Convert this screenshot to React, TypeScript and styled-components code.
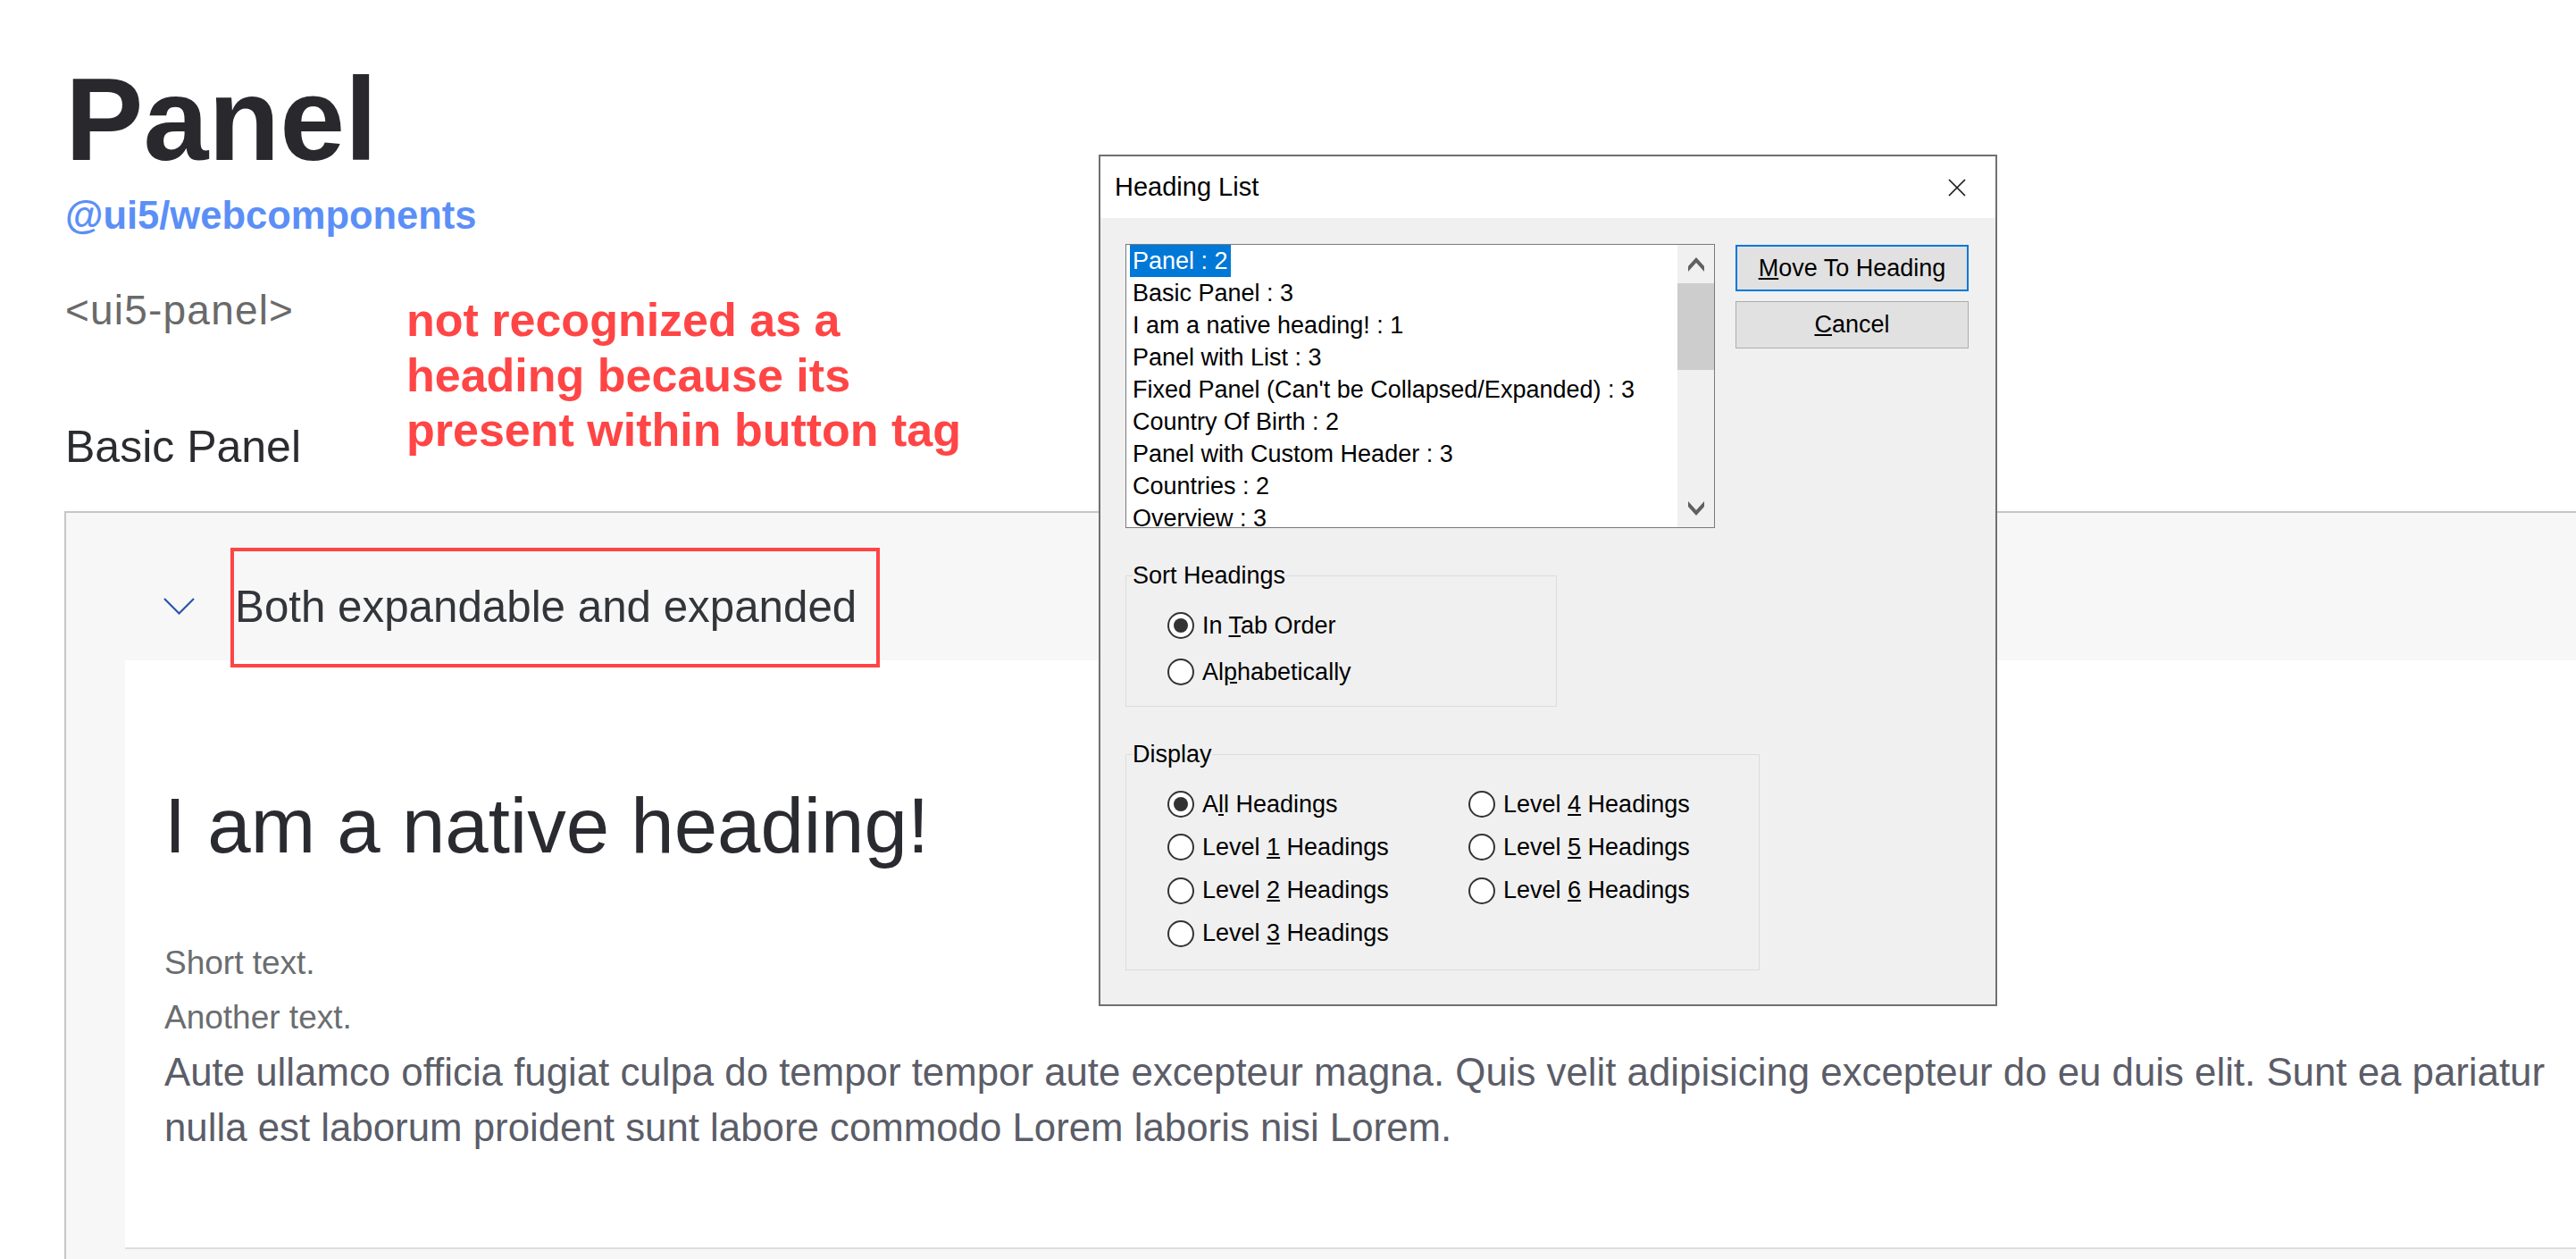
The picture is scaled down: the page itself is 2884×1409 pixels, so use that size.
import React from 'react'
import styled, { createGlobalStyle } from 'styled-components'

const GlobalStyle = createGlobalStyle`
  html, body {
    margin: 0;
    padding: 0;
    background: #ffffff;
  }
  body {
    font-family: "Liberation Sans", Arial, sans-serif;
    overflow: hidden;
  }
`

const Page = styled.div`
  position: relative;
  width: 2884px;
  height: 1409px;
  overflow: hidden;
  padding-left: 73px;
  box-sizing: border-box;
  display: flex;
  flex-direction: column;
`

const Title = styled.h1`
  margin: 68px 0 0;
  font-size: 131px;
  line-height: 1;
  font-weight: 700;
  color: #29292d;
`

const Package = styled.div`
  margin-top: 20.6px;
  font-size: 43.5px;
  line-height: 1;
  font-weight: 700;
  color: #5b8ff7;
`

const IntroRow = styled.div`
  display: flex;
  margin-top: 61px;
`

const IntroColumn = styled.div`
  width: 382px;
  display: flex;
  flex-direction: column;
`

const TagName = styled.div`
  font-size: 46px;
  line-height: 1;
  letter-spacing: 1.2px;
  color: #6a6a6a;
`

const SectionTitle = styled.div`
  margin-top: 105px;
  font-size: 50px;
  line-height: 1;
  color: #2b2c30;
`

const Note = styled.div`
  width: 640px;
  margin-top: 4px;
  font-size: 52px;
  line-height: 61.5px;
  font-weight: 700;
  color: #ff4545;
`

const PanelBox = styled.section`
  flex: 1;
  margin-top: 47px;
  margin-left: -1px;
  border-left: 2px solid #c6c6c6;
  border-top: 2px solid #c6c6c6;
  background: #f7f7f7;
`

const PanelHeader = styled.div`
  display: flex;
  align-items: center;
  padding: 79.5px 0 36.5px 109px;
`

const Chevron = styled.svg`
  width: 35px;
  height: 19px;
  flex: none;
`

const HeaderTitle = styled.span`
  position: relative;
  margin-left: 45px;
  font-size: 49.3px;
  line-height: 1;
  color: #32363a;

  &::after {
    content: '';
    position: absolute;
    left: -5px;
    top: -40.5px;
    width: 727px;
    height: 134px;
    border: 4px solid #ff4444;
    box-sizing: border-box;
  }
`

const PanelContent = styled.div`
  margin-left: 66px;
  padding: 141px 0 103px 44px;
  background: #ffffff;
  border-bottom: 2px solid #dedede;
`

const NativeHeading = styled.h2`
  margin: 0;
  font-size: 87px;
  line-height: 1;
  font-weight: 400;
  color: #2a2b30;
`

const ShortLines = styled.div`
  margin-top: 79.7px;
  font-size: 37px;
  line-height: 61px;
  color: #6a6d70;
`

const Paragraph = styled.p`
  margin: 0;
  padding-right: 20px;
  font-size: 43.8px;
  line-height: 62px;
  color: #5b5d68;
`

/* Windows dialog on top of the page */

const Dialog = styled.div`
  position: absolute;
  left: 1230px;
  top: 173px;
  width: 1006px;
  height: 953px;
  box-sizing: border-box;
  border: 2px solid #707070;
  background: #f0f0f0;
  font-size: 27px;
  color: #000000;
`

const TitleBar = styled.div`
  height: 69px;
  display: flex;
  align-items: center;
  justify-content: space-between;
  padding: 0 33px 0 16px;
  background: #ffffff;
  font-size: 29px;
`

const DialogBody = styled.div`
  padding: 29px 0 0 28px;
`

const TopRow = styled.div`
  display: flex;
  gap: 23px;
  align-items: flex-start;
`

const ListBox = styled.div`
  width: 660px;
  height: 318px;
  box-sizing: border-box;
  border: 1px solid #7a7a7a;
  background: #ffffff;
  display: flex;
`

const Items = styled.div`
  flex: 1;
  overflow: hidden;
`

const Item = styled.div`
  height: 36px;
  line-height: 36px;
  padding-left: 4px;
  white-space: nowrap;
`

const ItemText = styled.span<{ $selected?: boolean }>`
  display: inline-block;
  padding: 0 3px;
  background: ${p => (p.$selected ? '#0078d7' : 'transparent')};
  color: ${p => (p.$selected ? '#ffffff' : '#000000')};
`

const ScrollBar = styled.div`
  width: 41px;
  background: #f0f0f0;
  display: flex;
  flex-direction: column;
`

const ScrollButton = styled.div<{ $h: number }>`
  height: ${p => p.$h}px;
  display: flex;
  align-items: center;
  justify-content: center;
`

const Thumb = styled.div`
  height: 97px;
  background: #cdcdcd;
`

const ScrollTrack = styled.div`
  flex: 1;
`

const ButtonColumn = styled.div`
  display: flex;
  flex-direction: column;
  gap: 11px;
  margin-top: 1px;
`

const DialogButton = styled.div<{ $default?: boolean }>`
  width: 261px;
  height: ${p => (p.$default ? 52 : 53)}px;
  box-sizing: border-box;
  display: flex;
  align-items: center;
  justify-content: center;
  background: #e1e1e1;
  border: ${p => (p.$default ? '2px solid #0078d7' : '1px solid #adadad')};
`

const Group = styled.fieldset<{ $width: number; $gap: number }>`
  width: ${p => p.$width}px;
  box-sizing: border-box;
  margin: ${p => p.$gap}px 0 0;
  padding: 22.5px 0 ${p => (p.$width > 600 ? 20 : 18)}px 7px;
  border: 1px solid #dcdcdc;
`

const Legend = styled.legend`
  padding: 0;
  font-size: 27px;
  line-height: 1;
`

const RadioGrid = styled.div<{ $rows: number; $rowGap: number }>`
  display: grid;
  grid-auto-flow: column;
  grid-template-rows: repeat(${p => p.$rows}, 40px);
  grid-template-columns: 337px auto;
  row-gap: ${p => p.$rowGap}px;
  padding-left: 39px;
`

const RadioRow = styled.div`
  display: flex;
  align-items: center;
  gap: 9px;
`

const RadioCircle = styled.span<{ $checked?: boolean }>`
  width: 30px;
  height: 30px;
  box-sizing: border-box;
  border-radius: 50%;
  border: 2px solid #333333;
  background: #ffffff;
  display: flex;
  align-items: center;
  justify-content: center;

  &::after {
    content: '';
    width: 16px;
    height: 16px;
    border-radius: 50%;
    background: ${p => (p.$checked ? '#333333' : 'transparent')};
  }
`

const headings = [
  'Panel : 2',
  'Basic Panel : 3',
  'I am a native heading! : 1',
  'Panel with List : 3',
  "Fixed Panel (Can't be Collapsed/Expanded) : 3",
  'Country Of Birth : 2',
  'Panel with Custom Header : 3',
  'Countries : 2',
  'Overview : 3',
]

const sortOptions = [
  { label: <>In <u>T</u>ab Order</>, checked: true },
  { label: <>Al<u>p</u>habetically</>, checked: false },
]

const displayOptions = [
  { label: <>A<u>l</u>l Headings</>, checked: true },
  { label: <>Level <u>1</u> Headings</>, checked: false },
  { label: <>Level <u>2</u> Headings</>, checked: false },
  { label: <>Level <u>3</u> Headings</>, checked: false },
  { label: <>Level <u>4</u> Headings</>, checked: false },
  { label: <>Level <u>5</u> Headings</>, checked: false },
  { label: <>Level <u>6</u> Headings</>, checked: false },
]

function Radio({ label, checked }: { label: React.ReactNode; checked: boolean }) {
  return (
    <RadioRow>
      <RadioCircle $checked={checked} />
      <span>{label}</span>
    </RadioRow>
  )
}

function HeadingListDialog() {
  return (
    <Dialog>
      <TitleBar>
        <span>Heading List</span>
        <svg width="20" height="20" viewBox="0 0 20 20">
          <path d="M1 1 L19 19 M19 1 L1 19" stroke="#1a1a1a" strokeWidth="1.7" />
        </svg>
      </TitleBar>
      <DialogBody>
        <TopRow>
          <ListBox>
            <Items>
              {headings.map((h, i) => (
                <Item key={'h' + i}>
                  <ItemText $selected={i === 0}>{h}</ItemText>
                </Item>
              ))}
            </Items>
            <ScrollBar>
              <ScrollButton $h={43}>
                <svg width="18" height="16" viewBox="0 0 18 16">
                  <path d="M9 0 L18 10 L18 16 L9 6 L0 16 L0 10 Z" fill="#606060" />
                </svg>
              </ScrollButton>
              <Thumb />
              <ScrollTrack />
              <ScrollButton $h={42}>
                <svg width="18" height="16" viewBox="0 0 18 16">
                  <path d="M9 16 L18 6 L18 0 L9 10 L0 0 L0 6 Z" fill="#606060" />
                </svg>
              </ScrollButton>
            </ScrollBar>
          </ListBox>
          <ButtonColumn>
            <DialogButton $default>
              <span><u>M</u>ove To Heading</span>
            </DialogButton>
            <DialogButton>
              <span><u>C</u>ancel</span>
            </DialogButton>
          </ButtonColumn>
        </TopRow>
        <Group $width={483} $gap={39.5}>
          <Legend>Sort Headings</Legend>
          <RadioGrid $rows={2} $rowGap={12}>
            {sortOptions.map((o, i) => (
              <Radio key={'s' + i} label={o.label} checked={o.checked} />
            ))}
          </RadioGrid>
        </Group>
        <Group $width={710} $gap={39.5}>
          <Legend>Display</Legend>
          <RadioGrid $rows={4} $rowGap={8.33}>
            {displayOptions.map((o, i) => (
              <Radio key={'d' + i} label={o.label} checked={o.checked} />
            ))}
          </RadioGrid>
        </Group>
      </DialogBody>
    </Dialog>
  )
}

export default function App() {
  return (
    <Page>
      <GlobalStyle />
      <Title>Panel</Title>
      <Package>@ui5/webcomponents</Package>
      <IntroRow>
        <IntroColumn>
          <TagName>&lt;ui5-panel&gt;</TagName>
          <SectionTitle>Basic Panel</SectionTitle>
        </IntroColumn>
        <Note>not recognized as a heading because its present within button tag</Note>
      </IntroRow>
      <PanelBox>
        <PanelHeader>
          <Chevron viewBox="0 0 35 19">
            <polyline points="1,1 17.5,17.5 34,1" fill="none" stroke="#2b55a9" strokeWidth="2.2" />
          </Chevron>
          <HeaderTitle>Both expandable and expanded</HeaderTitle>
        </PanelHeader>
        <PanelContent>
          <NativeHeading>I am a native heading!</NativeHeading>
          <ShortLines>
            <div>Short text.</div>
            <div>Another text.</div>
          </ShortLines>
          <Paragraph>
            Aute ullamco officia fugiat culpa do tempor tempor aute excepteur magna. Quis velit adipisicing
            excepteur do eu duis elit. Sunt ea pariatur nulla est laborum proident sunt labore commodo Lorem
            laboris nisi Lorem.
          </Paragraph>
        </PanelContent>
      </PanelBox>
      <HeadingListDialog />
    </Page>
  )
}
